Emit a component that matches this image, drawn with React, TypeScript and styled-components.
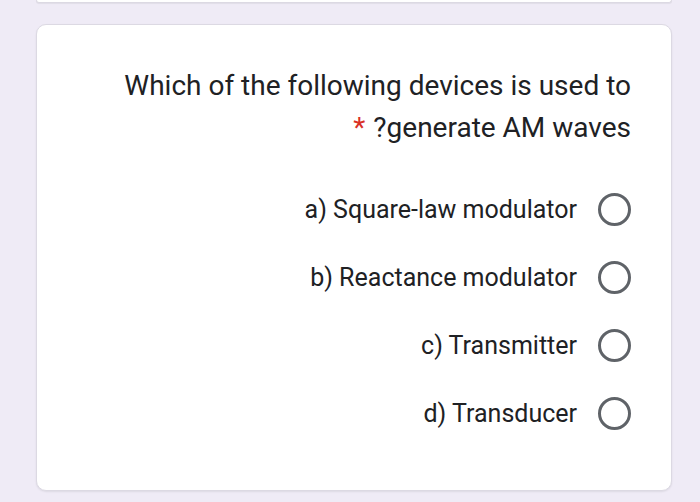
import React from "react";
import styled, { createGlobalStyle } from "styled-components";

const Global = createGlobalStyle`
  html, body { margin: 0; padding: 0; background: #efebf6; }
  body { font-family: Roboto, "Noto Sans", Arial, sans-serif; color: #202124; }
`;

const Page = styled.div`
  box-sizing: border-box;
  width: 700px;
  height: 502px;
  overflow: hidden;
  padding-left: 8px;
  display: flex;
  flex-direction: column;
  align-items: center;
  gap: 21px;
`;

const PrevCard = styled.div`
  width: 634px;
  height: 2px;
  background: #fff;
  border: 1px solid #dcd9e3;
  border-top: none;
  border-radius: 0 0 8px 8px;
  box-shadow: 0 1px 1px rgba(0, 0, 0, 0.06);
`;

const Card = styled.div`
  box-sizing: border-box;
  width: 636px;
  height: 467px;
  background: #fff;
  border: 1px solid #dcd9e3;
  border-radius: 10px;
  box-shadow: 0 1px 2px rgba(0, 0, 0, 0.08);
  padding: 40px 40px 0 0;
  display: flex;
  flex-direction: column;
  align-items: flex-end;
`;

const Question = styled.div`
  font-size: 28px;
  line-height: 42px;
  text-align: right;
`;

const Required = styled.span`
  color: #d93025;
  margin-right: 8px;
`;

const Options = styled.div`
  margin-top: 44px;
  display: flex;
  flex-direction: column;
  gap: 36px;
`;

const Option = styled.label`
  display: flex;
  align-items: center;
  justify-content: flex-end;
  gap: 21px;
  height: 32px;
  font-size: 25px;
`;

const Radio = styled.span`
  box-sizing: border-box;
  width: 33px;
  height: 33px;
  border-radius: 50%;
  border: 3.5px solid #5f6368;
  flex: none;
`;

const options = [
  "a) Square-law modulator",
  "b) Reactance modulator",
  "c) Transmitter",
  "d) Transducer",
];

export default function App() {
  return (
    <>
      <Global />
      <Page>
        <PrevCard />
        <Card>
          <Question>
            Which of the following devices is used to
            <br />
            <Required>*</Required>?generate AM waves
          </Question>
          <Options>
            {options.map((o) => (
              <Option key={o}>
                {o}
                <Radio />
              </Option>
            ))}
          </Options>
        </Card>
      </Page>
    </>
  );
}
